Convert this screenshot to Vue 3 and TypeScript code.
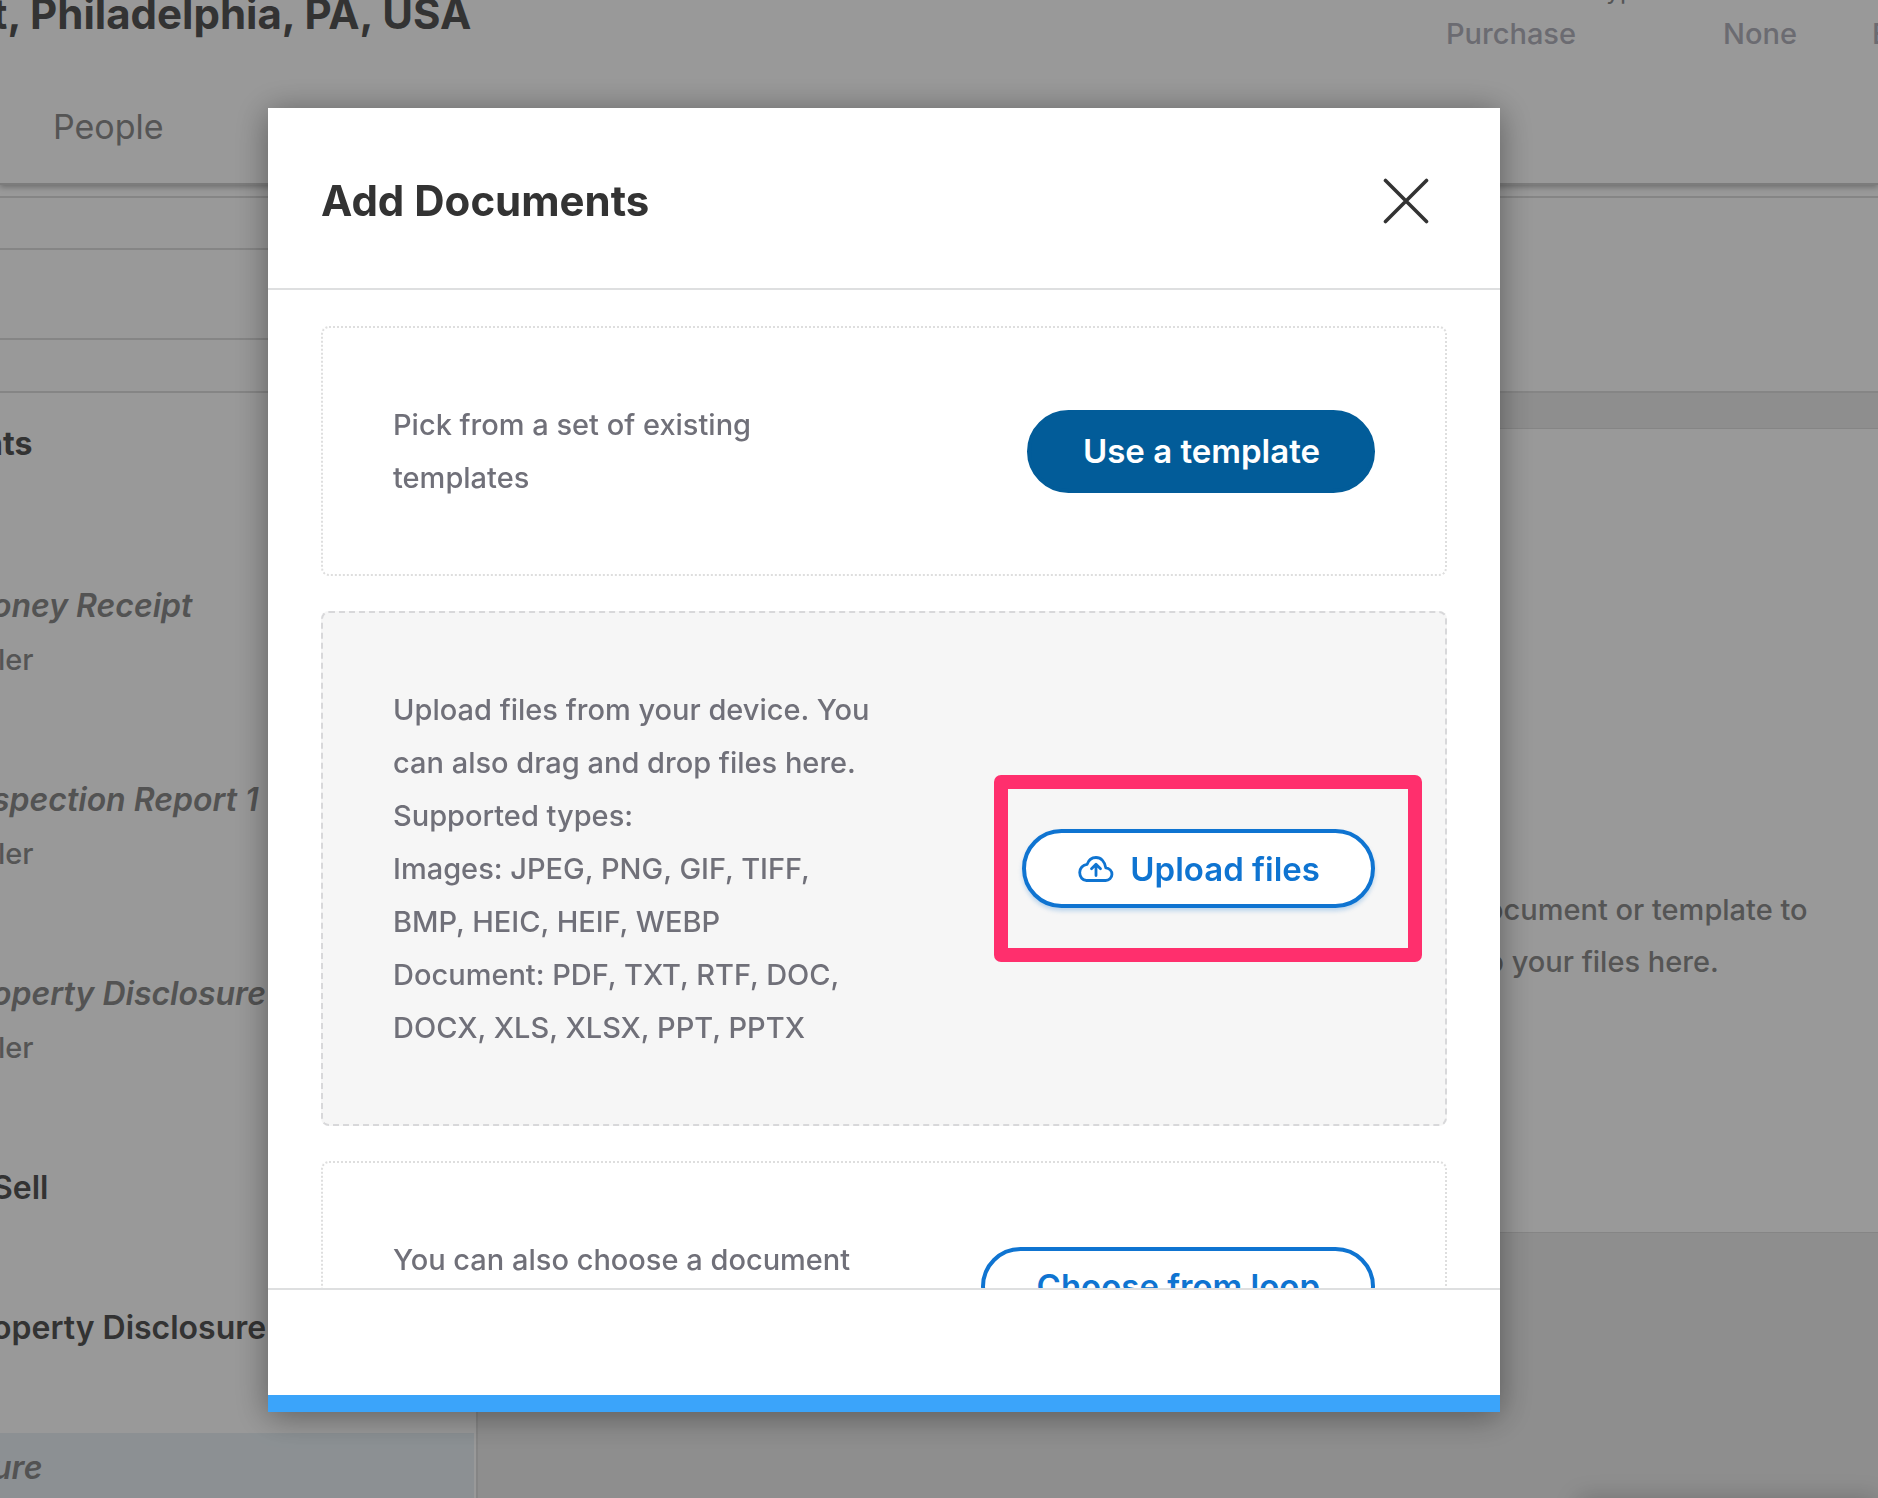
<script setup lang="ts">
import { ref } from 'vue'

interface Meta { label: string; value: string }
interface Row { title: string; note?: string; placeholder?: boolean; selected?: boolean }
interface Option { kind: 'template' | 'upload' | 'loop'; lines: string[]; action: string }

const open = ref(true)

const metas: Meta[] = [
  { label: 'Transaction Type', value: 'Purchase' },
  { label: 'Status', value: 'None' },
  { label: 'E', value: 'E' },
]

const rows: Row[] = [
  { title: 'oney Receipt', note: 'ler', placeholder: true },
  { title: 'spection Report 1', note: 'ler', placeholder: true },
  { title: 'operty Disclosure', note: 'ler', placeholder: true },
  { title: 'Sell' },
  { title: 'operty Disclosure' },
  { title: 'ure', placeholder: true, selected: true },
]

const options: Option[] = [
  { kind: 'template', lines: ['Pick from a set of existing', 'templates'], action: 'Use a template' },
  {
    kind: 'upload',
    lines: [
      'Upload files from your device. You',
      'can also drag and drop files here.',
      'Supported types:',
      'Images: JPEG, PNG, GIF, TIFF,',
      'BMP, HEIC, HEIF, WEBP',
      'Document: PDF, TXT, RTF, DOC,',
      'DOCX, XLS, XLSX, PPT, PPTX',
    ],
    action: 'Upload files',
  },
  { kind: 'loop', lines: ['You can also choose a document', 'from another loop'], action: 'Choose from loop' },
]
</script>

<template>
  <div class="page">
    <header class="top">
      <div class="top-row">
        <h1 class="address">t, Philadelphia, PA, USA</h1>
        <dl class="metas">
          <div v-for="m in metas" :key="m.label" class="meta">
            <dt>{{ m.label }}</dt>
            <dd>{{ m.value }}</dd>
          </div>
        </dl>
      </div>
      <nav class="tabs"><a href="#people">People</a></nav>
    </header>

    <div class="toolbar">
      <div class="toolbar-left">
        <div class="strip strip-a"></div>
        <div class="strip strip-b"></div>
      </div>
    </div>

    <div class="main">
      <aside class="side">
        <h2 class="side-head">nts</h2>
        <ul class="rows">
          <li
            v-for="(r, i) in rows"
            :key="i"
            class="row"
            :class="{ placeholder: r.placeholder, selected: r.selected, tall: r.note }"
          >
            <span class="row-title">{{ r.title }}</span>
            <span v-if="r.note" class="row-note">{{ r.note }}</span>
          </li>
        </ul>
      </aside>
      <section class="canvas">
        <div class="preview">
          <p>ocument or template to<br />p your files here.</p>
        </div>
      </section>
    </div>
    <div class="dock"></div>

    <div v-if="open" class="overlay">
      <div class="modal" role="dialog" aria-modal="true" aria-labelledby="modal-title">
        <div class="modal-head">
          <h2 id="modal-title">Add Documents</h2>
          <button class="close" type="button" aria-label="Close" @click="open = false">
            <svg width="46" height="46" viewBox="0 0 46 46" aria-hidden="true">
              <path d="M2.500 2.500 43.500 43.500M43.500 2.500 2.500 43.500" fill="none" stroke="#333" stroke-width="3.600" stroke-linecap="round" />
            </svg>
          </button>
        </div>
        <div class="modal-body">
          <section v-for="o in options" :key="o.kind" class="option" :class="o.kind">
            <p><span v-for="l in o.lines" :key="l" class="line">{{ l }}</span></p>
            <div class="action">
              <button type="button" class="pill" :class="{ solid: o.kind === 'template' }">
                <svg v-if="o.kind === 'upload'" class="cloud" width="36" height="28" viewBox="0 0 36 28" aria-hidden="true">
                  <g fill="none" stroke="currentColor" stroke-width="2.800" stroke-linecap="round" stroke-linejoin="round">
                    <path d="M8.500 25.500H27.500a6.300 6.300 0 0 0 .3-12.600C27 6.700 23 2.500 18 2.500c-4.300 0-7.500 2.800-8.900 6.900-4.300.4-7.400 3.800-7.400 8.200 0 4.500 3 7.900 6.800 7.900z" />
                    <path d="M18 20.500V10M13.500 13.800 18 9.300l4.500 4.500" />
                  </g>
                </svg>
                {{ o.action }}
              </button>
              <span v-if="o.kind === 'upload'" class="callout"></span>
            </div>
          </section>
        </div>
        <div class="modal-foot"></div>
      </div>
    </div>
  </div>
</template>

<style>
html,
body {
  margin: 0;
  overflow: hidden;
}
</style>

<style scoped>
.page {
  height: 100vh;
  display: flex;
  flex-direction: column;
  overflow: hidden;
  background: #fff;
  color: #555;
  font-family: Inter, "Liberation Sans", sans-serif;
  font-size: 29px;
  font-weight: 500;
}
h1, h2, p, dl, dd, ul { margin: 0; padding: 0; }
ul { list-style: none; }

.top {
  flex: none;
  height: 183px;
  border-bottom: 2px solid #cfcfcf;
  box-shadow: 0 2px 6px rgba(0, 0, 0, 0.3);
  z-index: 1;
}
.top-row { display: flex; justify-content: space-between; height: 92px; }
.address { font-size: 42px; line-height: 44px; font-weight: 700; white-space: nowrap; margin-left: -8px; margin-top: -8px; }
.metas { display: flex; gap: 73px; margin-top: -28px; }
.meta { white-space: nowrap; overflow: hidden; }
.meta:nth-child(1) { width: 204px; }
.meta:nth-child(2) { width: 76px; }
.meta:nth-child(3) { width: 6px; }
.meta dt { font-size: 25px; line-height: 36px; font-weight: 400; color: #8e8e8e; }
.meta dd { font-size: 29px; line-height: 52px; color: #b2b2bc; }
.tabs { padding-left: 53px; }
.tabs a { font-size: 34px; line-height: 70px; font-weight: 400; color: #8e8e8e; text-decoration: none; }

.toolbar {
  flex: none;
  height: 193px;
  margin-top: 11px;
  border-top: 2px solid #dedede;
  border-bottom: 2px solid #dedede;
}
.toolbar-left { width: 478px; }
.strip { border-bottom: 2px solid #dedede; }
.strip-a { height: 50px; }
.strip-b { height: 88px; }

.main { flex: 1; display: flex; min-height: 0; }
.side { flex: none; width: 476px; border-right: 2px solid #dedede; overflow: hidden; }
.side-head { height: 178px; box-sizing: border-box; padding-top: 31px; font-size: 32px; line-height: 40px; margin-left: -17px; }
.row { height: 140px; box-sizing: border-box; padding-top: 15px; margin-right: 2px; }
.row.tall { height: 194px; }
.row.selected { background: #e9f1f6; }
.row-title { display: block; font-size: 32px; line-height: 40px; font-weight: 600; margin-left: -8px; white-space: nowrap; }
.placeholder .row-title { font-style: italic; color: #8a8a8a; }
.row-note { display: block; line-height: 68px; color: #8e8e8e; margin-left: -2px; }
.canvas { flex: 1; background: #ededed; padding-top: 35px; }
.preview {
  height: 803px;
  display: flex;
  align-items: flex-start;
  border-top: 1px solid #dedede;
  border-bottom: 1px solid #dedede;
  background: #fff;
  white-space: nowrap;
}
.preview p { width: 392px; margin: 455px 0 0 auto; color: #8e8e8e; line-height: 52px; }
.dock { position: absolute; top: 100%; left: 84%; right: 0; height: 40px; box-shadow: 0 0 24px rgba(0, 0, 0, 0.2); }

.overlay {
  position: fixed;
  inset: 0;
  z-index: 2;
  display: flex;
  padding: 108px 378px 86px 268px;
  background: rgba(0, 0, 0, 0.4);
}
.modal {
  flex: 1;
  display: flex;
  flex-direction: column;
  background: #fff;
  border-bottom: 17px solid #3ba4fa;
  box-shadow: 0 4px 32px rgba(0, 0, 0, 0.4);
  color: #333;
}
.modal-head {
  flex: none;
  display: flex;
  align-items: center;
  justify-content: space-between;
  height: 174px;
  padding: 6px 71px 0 53px;
  border-bottom: 2px solid #dedfe0;
}
.modal-head h2 { font-size: 42px; line-height: 48px; font-weight: 700; }
.close { display: flex; padding: 0; border: 0; background: none; }
.modal-body { flex: 1; min-height: 0; overflow: hidden; padding: 36px 53px 0; }
.option {
  display: flex;
  align-items: center;
  justify-content: space-between;
  padding: 70px 70px;
  margin-bottom: 35px;
  border: 2px dotted #dedede;
  border-radius: 8px;
}
.option p { color: #707079; line-height: 53px; }
.line { display: block; white-space: nowrap; }
.option.upload { background: #f6f6f6; border: 2px dashed #d8d8da; }
.action { position: relative; }
.pill {
  display: flex;
  align-items: center;
  gap: 16px;
  box-sizing: border-box;
  height: 79px;
  padding: 0 51px 0 52px;
  border: 4px solid #0f74d1;
  border-radius: 42px;
  background: #fff;
  color: #0f74d1;
  font: 600 33px/40px Inter, "Liberation Sans", sans-serif;
}
.upload .pill { box-shadow: 0 3px 4px rgba(15, 116, 209, 0.25); }
.pill.solid { height: 83px; border-color: #025c99; background: #025c99; color: #fff; }
.callout {
  position: absolute;
  inset: -54px -47px -54px -28px;
  border: 14px solid #ff2f6d;
  border-radius: 7px;
  pointer-events: none;
}
.modal-foot { flex: none; height: 105px; border-top: 2px solid #dedfe0; }
</style>
